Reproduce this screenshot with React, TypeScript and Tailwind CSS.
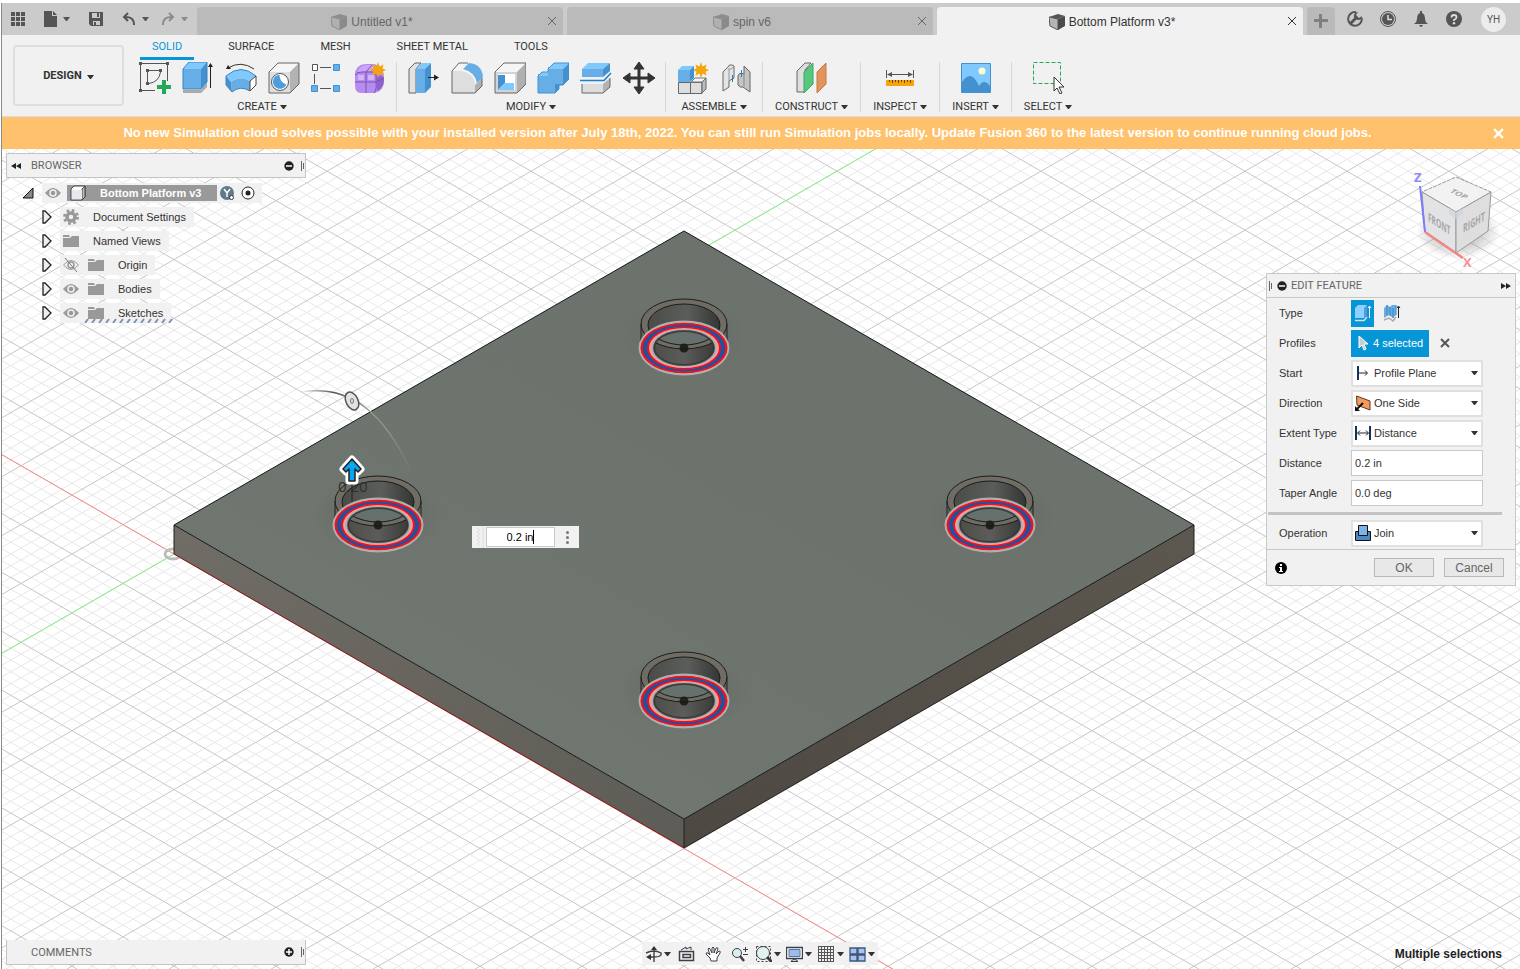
import { useState, type ReactNode } from "react";

const STEP_X = 51;
const STEP_Y = 29.445;
const ORIGIN_X = 174;
const ORIGIN_Y = 554;
const SLOPE = STEP_Y / STEP_X;

const HOLES = [
  [684, 348],
  [990, 525],
  [684, 701],
  [378, 525],
];

// One path per family of isometric grid lines, so the whole grid is two nodes.
function gridPaths() {
  let major = "";
  let minor = "";
  for (let i = -200; i <= 300; i++) {
    const offset = (i * STEP_Y * 2) / 5;
    const down = ORIGIN_Y + offset - ORIGIN_X * SLOPE;
    const up = ORIGIN_Y + offset + ORIGIN_X * SLOPE;
    const line =
      `M0 ${down.toFixed(2)}L1520 ${(down + 1520 * SLOPE).toFixed(2)}` +
      `M0 ${up.toFixed(2)}L1520 ${(up - 1520 * SLOPE).toFixed(2)}`;
    if (i % 5 === 0) major += line;
    else minor += line;
  }
  return { major, minor };
}

const GRID = gridPaths();

function ring(rx: number, ry: number) {
  return `M${-rx} 0A${rx} ${ry} 0 1 0 ${rx} 0A${rx} ${ry} 0 1 0 ${-rx} 0Z`;
}

function Hole({ x, y }: { x: number; y: number }) {
  return (
    <g transform={`translate(${x} ${y})`}>
      <ellipse cy="-10" rx="66" ry="40" fill="url(#holeShade)" />
      <path d="M-43 -24V-2H43V-24Z" fill="#65625b" />
      <ellipse cy="-24" rx="43" ry="25" fill="#6f6c64" stroke="#1c1c1a" />
      <ellipse cy="-23" rx="36" ry="21" fill="url(#bore)" stroke="#1c1c1a" />
      <path d="M-43 -24V-6M43 -24V-6" stroke="#222" />
      <path d={ring(45.5, 27.5) + ring(30, 17)} fill="#b3aeae" fillRule="evenodd" />
      <path d={ring(36, 21) + ring(33, 19)} fill="#f0a0a0" fillRule="evenodd" />
      <path d={ring(43, 25) + ring(36, 21)} fill="#1f51a3" fillRule="evenodd" />
      <path d={ring(43.5, 25.3) + ring(41.3, 23.6)} fill="#f80f16" fillRule="evenodd" />
      <path d={ring(37, 21.6) + ring(35, 20)} fill="#f80f16" fillRule="evenodd" />
      <g clipPath="url(#holeClip)">
        <rect x="-32" y="-20" width="64" height="40" fill="url(#lower)" />
        <ellipse cy="-24" rx="43" ry="25" fill="#6f6c64" stroke="#1c1c1a" />
        <ellipse cy="-24" rx="36" ry="21" fill="#66706d" stroke="#1c1c1a" />
      </g>
      <ellipse rx="30" ry="17" fill="none" stroke="#2c2f30" strokeWidth="2" opacity="0.75" />
      <circle r="4.5" fill="#151515" opacity="0.85" />
    </g>
  );
}

function Scene() {
  return (
    <svg
      className="absolute inset-0 h-full w-full"
      viewBox="2 149 1518 820"
      preserveAspectRatio="xMidYMid slice"
      fill="none"
      aria-label="Model view"
    >
      <defs>
        <linearGradient id="topFace" x1="0" y1="1" x2="1" y2="0">
          <stop offset="0" stopColor="#727872" />
          <stop offset="0.5" stopColor="#6d736d" />
          <stop offset="1" stopColor="#6c716c" />
        </linearGradient>
        <linearGradient id="leftFace" x1="0" y1="0" x2="1" y2="1">
          <stop offset="0" stopColor="#706d66" />
          <stop offset="1" stopColor="#5e5c56" />
        </linearGradient>
        <linearGradient id="rightFace" x1="0" y1="1" x2="1" y2="0">
          <stop offset="0" stopColor="#4d4841" />
          <stop offset="1" stopColor="#5c5850" />
        </linearGradient>
        <linearGradient id="bore">
          <stop offset="0" stopColor="#4a4c48" />
          <stop offset="0.55" stopColor="#5a5d5a" />
          <stop offset="1" stopColor="#343635" />
        </linearGradient>
        <linearGradient id="lower">
          <stop offset="0" stopColor="#4c4c48" />
          <stop offset="0.5" stopColor="#5c5d5a" />
          <stop offset="1" stopColor="#393a38" />
        </linearGradient>
        <linearGradient id="arcFade" x1="300" y1="0" x2="412" y2="0" gradientUnits="userSpaceOnUse">
          <stop offset="0" stopColor="#555" stopOpacity="0" />
          <stop offset="0.3" stopColor="#555" />
          <stop offset="0.6" stopColor="#999" />
          <stop offset="1" stopColor="#bbb" stopOpacity="0" />
        </linearGradient>
        <radialGradient id="holeShade">
          <stop offset="0.5" stopColor="#646964" stopOpacity="0.6" />
          <stop offset="1" stopColor="#646964" stopOpacity="0" />
        </radialGradient>
        <radialGradient id="cubeShadow">
          <stop offset="0.4" stopColor="#777" stopOpacity="0.45" />
          <stop offset="1" stopColor="#777" stopOpacity="0" />
        </radialGradient>
        <clipPath id="holeClip">
          <ellipse rx="30" ry="17" />
        </clipPath>
      </defs>

      <path d={GRID.minor} stroke="#e8e8e8" />
      <path d={GRID.major} stroke="#c6c6c6" />
      <path d="M0 453.600L174 554L1000 1031" stroke="#ff8c8c" />
      <path d="M0 654.400L174 554L1000 77" stroke="#86f586" />
      <ellipse cx="173" cy="554" rx="8" ry="5" stroke="#bdbdbd" strokeWidth="3" />

      <path d="M174 525L684 819V848L174 554Z" fill="url(#leftFace)" />
      <path d="M1194 525L684 819V848L1194 554Z" fill="url(#rightFace)" />
      <path d="M684 231L1194 525L684 819L174 525Z" fill="url(#topFace)" stroke="#12161a" />
      <path d="M174 525V554M684 819V848L1194 554V525" stroke="#22211f" />
      <path d="M174 554L684 848" stroke="#7d1818" />

      {HOLES.map(([x, y]) => (
        <Hole key={`${x}-${y}`} x={x} y={y} />
      ))}

      <path d="M301 392C352 384 385 415 411 471" stroke="url(#arcFade)" strokeWidth="1.5" />
      <ellipse cx="352" cy="401" rx="6" ry="9.500" transform="rotate(-26 352 401)" fill="#e3e3e3" stroke="#555" strokeWidth="1.500" />
      <ellipse cx="352" cy="401" rx="1.500" ry="2.500" stroke="#777" />
      <text x="338" y="492" fontSize="15" fill="#2e302e" className="font-['Open_Sans',sans-serif]">0.20</text>
      <path d="M352 484V502" stroke="#222" />
      <path d="M352 459L361 469L358 472L355 469V481H349V469L346 472L343 469Z" fill="#08a5f0" stroke="#fff" strokeWidth="7" strokeLinejoin="round" />
      <path d="M352 459L361 469L358 472L355 469V481H349V469L346 472L343 469Z" fill="#08a5f0" stroke="#222" strokeWidth="1.500" strokeLinejoin="round" />
    </svg>
  );
}

function ViewCube() {
  return (
    <svg className="absolute top-5 right-5 h-[104px] w-[96px]" viewBox="1404 169 96 104" aria-label="View cube">
      <ellipse cx="1458" cy="232" rx="42" ry="27" fill="url(#cubeShadow)" />
      <path d="M1456 177L1491 192L1456 212L1422 192Z" fill="#f2f2f2" stroke="#999" strokeDasharray="4 1" />
      <path d="M1422 192L1456 212V253L1425 232Z" fill="#e3e3e5" stroke="#999" />
      <path d="M1491 192L1456 212V253L1488 231Z" fill="#dedede" stroke="#999" />
      <path d="M1449 208L1456 212L1463 208V214L1456 219L1449 214Z" fill="#cdd3e0" opacity="0.7" />
      <g className="font-['Open_Sans',sans-serif] font-bold" fill="#a5a7ab" fontSize="10">
        <text transform="matrix(.87 .4 -.7 .5 1449 192)" fontSize="9">TOP</text>
        <text transform="matrix(.66 .42 0 1.200 1428 221)">FRONT</text>
        <text transform="matrix(.72 -.42 0 1.200 1463 233)">RIGHT</text>
      </g>
      <path d="M1420 186L1425 232" stroke="#7d7dfa" strokeWidth="2" />
      <path d="M1425 232L1463 258" stroke="#f08585" strokeWidth="2.500" />
      <text x="1414" y="182" fontSize="13" className="font-['Open_Sans',sans-serif] font-bold" fill="#8b8bf5">Z</text>
      <text x="1463" y="267" fontSize="13" className="font-['Open_Sans',sans-serif] font-bold" fill="#f79292">X</text>
    </svg>
  );
}

const Caret = () => (
  <svg className="h-[4px] w-[7px] shrink-0" viewBox="0 0 7 4" fill="currentColor">
    <path d="M0 0H7L4 4H3Z" />
  </svg>
);

function Icon({ children }: { children: ReactNode }) {
  return (
    <svg className="size-8" viewBox="0 0 32 32" fill="none">
      {children}
    </svg>
  );
}

const STAR = "M24 0L25.500 4.500L29.500 2.500L28.500 6.500L32 8L28.500 9.800L29.500 13.500L25.500 11.500L24 16L22.500 11.500L18.500 13.500L19.500 9.800L16 8L19.500 6.500L18.500 2.500L22.500 4.500Z";

const ICONS: Record<string, ReactNode> = {
  sketch: (
    <>
      <path d="M3 1.500H27M1.500 3V27M28.500 3V19M3 28.500H16" stroke="#555" />
      <path d="M0 0h3v3H0zM27 0h3v3h-3zM0 27h3v3H0zM7 7h3v3H7zM20 7h3v3h-3zM7 20h3v3H7z" fill="#555" />
      <path d="M10 8.500H20M8.500 10V20M21.500 10Q20 20 10 21.500" stroke="#555" />
      <path d="M23 18h4v5h5v4h-5v5h-4v-5h-5v-4h5z" fill="#24a95b" />
    </>
  ),
  extrude: (
    <>
      <path d="M1 28H19L25 21V25L19 31H1Z" fill="#aaa" />
      <path d="M1 7H19V27H1Z" fill="#67aee6" />
      <path d="M1 7L7 0H25L19 7Z" fill="#80c9ff" />
      <path d="M19 7L25 0V20L19 27Z" fill="#4391cf" />
      <path d="M1 7L7 0H25V20L19 27H1Z" stroke="#3f84bb" />
      <path d="M28.500 3V26" stroke="#222" />
      <path d="M26 5L28.500 1L31 5Z" fill="#222" />
    </>
  ),
  revolve: (
    <>
      <path d="M3 6Q16 -2 29 7" stroke="#333" />
      <path d="M1 7L3 3L6 7Z" fill="#222" />
      <path d="M1 14Q16 1 31 14L25 19Q15 13 6 20Z" fill="#80c9ff" />
      <path d="M6 20Q15 13 25 19V29Q15 23 7 30Z" fill="#67aee6" />
      <path d="M1 14L6 20L7 30L1 23Z" fill="#4391cf" />
      <path d="M1 14Q16 1 31 14M1 14V23L7 30Q15 23 25 29" stroke="#3f84bb" />
      <path d="M25 19L31 14V23L25 29Z" fill="#fff" stroke="#444" />
    </>
  ),
  hole: (
    <>
      <path d="M1 10H22V31H1Z" fill="#dedede" />
      <path d="M1 10L10 1H31L22 10Z" fill="#f6f6f6" />
      <path d="M22 10L31 1V22L22 31Z" fill="#b3b3b3" />
      <path d="M1 10L10 1H31V22L22 31H1Z" stroke="#666" />
      <circle cx="12" cy="20" r="8.500" fill="#fff" stroke="#555" />
      <path d="M5.500 17A7 7 0 1 0 18.500 22.500A10 10 0 0 1 11.500 13Q7 13 5.500 17Z" fill="#4c9ddd" />
    </>
  ),
  pattern: (
    <>
      <path d="M9 5.500H20M9 26.500H20M3.500 12V22" stroke="#555" />
      <path d="M1.500 2.500h5v6h-5z" fill="#fff" stroke="#555" />
      <path d="M22.500 2.500h6v6h-6zM0.500 23.500h6v6h-6zM22.500 23.500h6v6h-6z" fill="#67aee6" stroke="#4391cf" />
    </>
  ),
  form: (
    <>
      <path d="M1 13Q1 3 11 2H20Q31 5 30 18Q30 29 21 31H7Q1 31 1 23Z" fill="#b78cf0" />
      <path d="M3 10Q6 4 12 3H20Q25 6 20 9Z" fill="#c9a6f8" />
      <path d="M23 14Q30 12 30 18Q30 26 23 29Z" fill="#8f63cf" />
      <path d="M1 20H22L30 16M12 31V10L18 3M1 13Q3 10 8 10H20Q23 11 22 20Q23 28 20 31" stroke="#7a50b0" />
      <path d="M4 13H10V18H4ZM14 13H20V18H14Z" fill="#d0b5f7" />
      <path d={STAR} fill="#f6a40c" />
    </>
  ),
  press: (
    <>
      <path d="M1 7L7 1H13L8 7V31H1Z" fill="#e2e2e2" stroke="#666" />
      <path d="M8 7H17V31H8Z" fill="#67aee6" />
      <path d="M8 7L14 1H23L17 7Z" fill="#80c9ff" />
      <path d="M17 7L23 1V25L17 31Z" fill="#4391cf" />
      <path d="M20 15.500H27" stroke="#222" />
      <path d="M26 12.500L31 15.500L26 18.500Z" fill="#222" />
    </>
  ),
  fillet: (
    <>
      <path d="M1 9L8 1H18L12 7Q24 9 25 23V31H1Z" fill="#f3f3f3" />
      <path d="M1 9H10Q23 11 24 23V31H1Z" fill="#dedede" />
      <path d="M24 23L31 16V24L24 31Z" fill="#b0b0b0" />
      <path d="M1 9L8 1H17M1 9V31H24L31 24V16" stroke="#666" />
      <path d="M12 7L18 1Q31 2 32 15L26 21Q24 10 12 7Z" fill="#67aee6" />
    </>
  ),
  shell: (
    <>
      <path d="M1 10H23V31H1Z" fill="#d4d4d4" />
      <path d="M1 10L10 1H32L23 10Z" fill="#f5f5f5" />
      <path d="M23 10L32 1V22L23 31Z" fill="#b0b0b0" />
      <path d="M1 10L10 1H32V22L23 31H1Z" stroke="#666" />
      <path d="M4 12H21V28H4Z" fill="#fff" />
      <path d="M4 13V28L11 21V13Z" fill="#4391cf" />
      <path d="M4 28H20V21H11Z" fill="#80c9ff" />
    </>
  ),
  combine: (
    <>
      <path d="M1 12H11V5H26V22H18V31H1Z" fill="#67aee6" />
      <path d="M1 14L5 10H11V14ZM11 7L17 1H32L26 7Z" fill="#80c9ff" />
      <path d="M26 7L32 1V17L26 23H22V27L18 31V22L26 22Z" fill="#4391cf" />
      <path d="M1 14L5 10H11V7L17 1H32V17L26 23H22V27L18 31H1Z" stroke="#4391cf" />
    </>
  ),
  split: (
    <>
      <path d="M2 7H23V15H2Z" fill="#67aee6" />
      <path d="M2 7L8 1H30L23 7Z" fill="#80c9ff" />
      <path d="M23 7L30 1V9L23 15Z" fill="#4391cf" />
      <path d="M0 18.500H24L31 11" stroke="#1583cf" strokeWidth="1.500" />
      <path d="M2 22H23V31H2Z" fill="#dedede" />
      <path d="M23 22L30 16V25L23 31Z" fill="#b3b3b3" />
      <path d="M2 22V31H23L30 25V16" stroke="#666" />
    </>
  ),
  move: (
    <path
      d="M16 0L21 7H17V15H25V11L32 16L25 21V17H17V25H21L16 32L11 25H15V17H7V21L0 16L7 11V15H15V7H11Z"
      fill="#333"
      stroke="#333"
    />
  ),
  component: (
    <>
      <path d="M1.500 20.500H13.500V31.500H1.500ZM13.500 20.500H25V31.500H13.500Z" fill="#dedede" stroke="#666" />
      <path d="M14 20L18 16H29L25 20Z" fill="#f5f5f5" stroke="#777" />
      <path d="M25 20L29 16V27L25 31Z" fill="#bbb" stroke="#666" />
      <path d="M1 8H13V20H1Z" fill="#67aee6" />
      <path d="M1 8L5 4H17L13 8Z" fill="#80c9ff" />
      <path d="M13 8L17 4V16L13 20Z" fill="#4391cf" />
      <path d={STAR} fill="#f6a40c" />
    </>
  ),
  joint: (
    <>
      <path d="M3 10L8 5Q9 2 12 3Q15 3 14 7V16L9 19V25L3 29Z" fill="#e4e4e4" stroke="#666" />
      <path d="M9 6V19M9 8L14 5" stroke="#999" />
      <path d="M30 10L24 4V12Q19 10 18 14V23Q20 26 23 25L30 30Z" fill="#c4c4c4" stroke="#666" />
      <path d="M24 12V24" stroke="#888" />
      <path d="M12.500 13V20M21.500 8V15" stroke="#1583cf" />
    </>
  ),
  plane: (
    <>
      <path d="M1 9L9 1H15L9 8V30H1Z" fill="#dedede" stroke="#666" />
      <path d="M8 10L17 1V22L8 31Z" fill="#58c77e" stroke="#3ca664" />
      <path d="M21 10L30 1V22L21 31Z" fill="#e3935d" stroke="#c87943" />
    </>
  ),
  measure: (
    <>
      <path d="M2.500 8V16M29.500 8V16M4 12.500H28" stroke="#555" />
      <path d="M3 12.500L8 10V15ZM29 12.500L24 10V15Z" fill="#555" />
      <path d="M2 18H30V24H2Z" fill="#f6a40c" />
      <path d="M5.500 18V20M8.500 18V21M11.500 18V20M14.500 18V21M17.500 18V20M20.500 18V21M23.500 18V20M26.500 18V21" stroke="#6b4500" />
    </>
  ),
  insert: (
    <>
      <path d="M2 2H30V30H2Z" fill="#80c9ff" />
      <path d="M2 20Q10 8 17 20L19 24Q24 16 30 24V30H2Z" fill="#4391cf" />
      <circle cx="22" cy="9" r="3.500" fill="#fffbd1" />
      <path d="M1.500 1.500H30.500V30.500H1.500Z" stroke="#4391cf" />
    </>
  ),
  select: (
    <>
      <path d="M1.500 0.500H28.500V21.500H1.500Z" stroke="#24a95b" strokeDasharray="4 2" />
      <path d="M22 15V29L25 26L28 32L30 31L27 25H32Z" fill="#fff" stroke="#333" />
    </>
  ),
};

const GROUPS = [
  { label: "CREATE", icons: ["sketch", "extrude", "revolve", "hole", "pattern", "form"] },
  { label: "MODIFY", icons: ["press", "fillet", "shell", "combine", "split", "move"] },
  { label: "ASSEMBLE", icons: ["component", "joint"] },
  { label: "CONSTRUCT", icons: ["plane"] },
  { label: "INSPECT", icons: ["measure"] },
  { label: "INSERT", icons: ["insert"] },
  { label: "SELECT", icons: ["select"] },
];

const RIBBON_TABS = ["SOLID", "SURFACE", "MESH", "SHEET METAL", "TOOLS"];
const DOCUMENTS = ["Untitled v1*", "spin v6", "Bottom Platform v3*"];

function BoxIcon({ active }: { active: boolean }) {
  return (
    <svg className="size-4" viewBox="0 0 16 16">
      <path d="M0 3L9 0L16 2L9 5Z" fill={active ? "#555" : "#8d8d8d"} />
      <path d="M0 3L9 5V16L1 12Z" fill={active ? "#b5b5b5" : "#b0b0b0"} stroke={active ? "#555" : "#8d8d8d"} />
      <path d="M9 5L16 2V12L9 16Z" fill={active ? "#4a4a4a" : "#8a8a8a"} />
    </svg>
  );
}

function Cross({ className }: { className: string }) {
  return (
    <svg className={className} viewBox="0 0 10 10" fill="none" stroke="currentColor">
      <path d="M1 1L9 9M9 1L1 9" />
    </svg>
  );
}

function TitleBar() {
  const [active, setActive] = useState(2);
  return (
    <header className="flex h-8 items-end bg-[#cbcbcb] text-[#555]">
      <div className="flex h-8 w-[195px] shrink-0 items-center gap-[19px] pl-[9px]">
        <button type="button" aria-label="Data panel">
          <svg className="size-[14px]" viewBox="0 0 14 14" fill="currentColor">
            <path d="M0 0h4v4H0zM5 0h4v4H5zM10 0h4v4h-4zM0 5h4v4H0zM5 5h4v4H5zM10 5h4v4h-4zM0 10h4v4H0zM5 10h4v4H5zM10 10h4v4h-4z" />
          </svg>
        </button>
        <button type="button" aria-label="File" className="flex items-center gap-[5px]">
          <svg className="h-4 w-[14px]" viewBox="0 0 14 16" fill="currentColor">
            <path d="M0 0H8V5H13V16H0Z" />
            <path d="M9 0L13 4H9Z" />
          </svg>
          <Caret />
        </button>
        <button type="button" aria-label="Save">
          <svg className="size-[14px]" viewBox="0 0 14 14">
            <path d="M0 0H14V14H2L0 12Z" fill="currentColor" />
            <path d="M3 1H11V6H3ZM4 9H11V13H4Z" fill="#cbcbcb" />
            <path d="M8 1H10V5H8ZM5 10H7V13H5Z" fill="currentColor" />
          </svg>
        </button>
        <div className="flex gap-3">
          <button type="button" aria-label="Undo" className="flex items-center gap-[6px]">
            <svg className="size-[14px]" viewBox="0 0 14 14" fill="none" stroke="currentColor" strokeWidth="2">
              <path d="M6 1L2 5L6 9M2 5Q12 4 12 13" />
            </svg>
            <Caret />
          </button>
          <button type="button" aria-label="Redo" className="flex items-center gap-[6px] text-[#8c8c8c]">
            <svg className="size-[14px]" viewBox="0 0 14 14" fill="none" stroke="currentColor" strokeWidth="2">
              <path d="M8 1L12 5L8 9M12 5Q2 4 2 13" />
            </svg>
            <Caret />
          </button>
        </div>
      </div>
      <nav className="flex h-7 min-w-0 flex-1 gap-1">
        {DOCUMENTS.map((name, i) => (
          <div
            key={name}
            className={`flex min-w-0 flex-1 items-center rounded-t pr-[6px] ${
              i === active ? "bg-[#f1f1f1] text-[#333]" : "bg-[#bababa] text-[#666]"
            }`}
          >
            <button
              type="button"
              onClick={() => setActive(i)}
              className="flex min-w-0 flex-1 items-center justify-center gap-1 pt-px text-[12px]"
            >
              <BoxIcon active={i === active} />
              {name}
            </button>
            <button type="button" aria-label={`Close ${name}`}>
              <Cross className="size-[10px]" />
            </button>
          </div>
        ))}
        <button type="button" aria-label="New design" className="flex w-7 items-center justify-center rounded-t bg-[#bababa] text-[#808080]">
          <svg className="size-[14px]" viewBox="0 0 14 14" fill="currentColor">
            <path d="M5 0h3v5h6v3H8v6H5V8H0V5h5z" />
          </svg>
        </button>
      </nav>
      <div className="flex h-8 w-[185px] shrink-0 items-center gap-[17px] pl-3">
        <button type="button" aria-label="Extensions">
          <svg className="size-4" viewBox="0 0 16 16" fill="none" stroke="currentColor">
            <path d="M9 1.200A6.800 6.800 0 1 0 14.700 7" strokeWidth="2" />
            <path d="M3 13L9 7" strokeWidth="3" />
            <path d="M11 1L9 4L12 7L15 5Q15 9 11 9Q6 8 7 4Q8 1 11 1Z" fill="currentColor" stroke="none" />
          </svg>
        </button>
        <button type="button" aria-label="Job status">
          <svg className="size-4" viewBox="0 0 16 16" fill="none">
            <circle cx="8" cy="8" r="7.500" stroke="currentColor" />
            <circle cx="8" cy="8" r="6" fill="currentColor" />
            <path d="M8 4V8.500H12" stroke="#ddd" strokeWidth="1.500" />
          </svg>
        </button>
        <button type="button" aria-label="Notifications">
          <svg className="size-4" viewBox="0 0 16 16" fill="currentColor">
            <path d="M7 0H9V2Q12 3 12 8Q12 11 15 13H1Q4 11 4 8Q4 3 7 2ZM6 14H10Q9 16 8 16Q7 16 6 14Z" />
          </svg>
        </button>
        <button type="button" aria-label="Help">
          <svg className="size-4" viewBox="0 0 16 16">
            <circle cx="8" cy="8" r="8" fill="currentColor" />
            <path d="M5.500 6.500Q5.500 4 8 4T10.500 6.200Q10.500 7.500 8 9V10" stroke="#ddd" strokeWidth="1.800" fill="none" />
            <circle cx="8" cy="12.200" r="1.200" fill="#ddd" />
          </svg>
        </button>
        <button type="button" className="ml-[2px] size-[25px] rounded-full bg-[#ececec] font-['Roboto',sans-serif] text-[10px]">
          YH
        </button>
      </div>
    </header>
  );
}

function Ribbon() {
  const [tab, setTab] = useState("SOLID");
  return (
    <div className="flex border-b border-[#dcdcdc] bg-[#f1f1f1] font-['Roboto',sans-serif] text-[11px] text-[#333]">
      <button
        type="button"
        className="mt-[10px] mb-[10px] ml-[11px] flex w-[111px] items-center justify-center gap-[5px] rounded border-2 border-[#dedede] pt-[2px] font-bold"
      >
        DESIGN
        <Caret />
      </button>
      <div className="min-w-0 pl-[9px]">
        <nav className="flex h-[25px] gap-[22px] pl-[7px]">
          {RIBBON_TABS.map((name) => (
            <button
              key={name}
              type="button"
              onClick={() => setTab(name)}
              className={`border-b-[3px] px-3 pt-[2px] ${
                tab === name ? "border-[#0696d7] text-[#0696d7]" : "border-transparent"
              }`}
            >
              {name}
            </button>
          ))}
        </nav>
        <div className="flex">
          {GROUPS.map((group, i) => (
            <div key={group.label} className="flex">
              {i > 0 && <div className="mt-[2px] mb-1 w-px bg-[#d6d6d6]" />}
              <div className={group.icons.length > 1 ? (i === 0 ? "pr-[5px]" : "px-[5px]") : "px-3"}>
                <div className="flex h-9 items-center justify-center">
                  {group.icons.map((name) => (
                    <button key={name} type="button" aria-label={name} className="flex w-[43px] justify-center">
                      <Icon>{ICONS[name]}</Icon>
                    </button>
                  ))}
                </div>
                <button type="button" className="flex h-5 w-full items-center justify-center gap-[3px] pt-[2px]">
                  {group.label}
                  <Caret />
                </button>
              </div>
            </div>
          ))}
        </div>
      </div>
    </div>
  );
}

const Grip = () => (
  <svg className="h-[10px] w-[3px]" viewBox="0 0 3 10" fill="#666">
    <path d="M0 0h1v10H0zM2 2h1v6H2z" />
  </svg>
);

function Rewind({ flip }: { flip?: boolean }) {
  return (
    <svg className={`h-[6px] w-[10px] ${flip ? "rotate-180" : ""}`} viewBox="0 0 10 6" fill="#222">
      <path d="M0 3L5 0V6ZM5 3L10 0V6Z" />
    </svg>
  );
}

function RoundSign({ plus }: { plus?: boolean }) {
  return (
    <svg className="size-[10px]" viewBox="0 0 10 10">
      <circle cx="5" cy="5" r="4.700" fill="#222" />
      <path d={plus ? "M2 5H8M5 2V8" : "M2 5H8"} stroke="#fff" strokeWidth="1.500" />
    </svg>
  );
}

function Eye({ off }: { off?: boolean }) {
  return (
    <svg className="size-4" viewBox="0 0 16 16" fill="none">
      <path d="M0.500 8Q8 -1 15.500 8Q8 17 0.500 8Z" fill={off ? "none" : "#999"} stroke="#999" />
      <circle cx="8" cy="8" r="3" fill={off ? "none" : "#999"} stroke={off ? "#999" : "#f1f1f1"} strokeWidth="1.500" />
      {off && <path d="M2 1L14 15" stroke="#777" />}
    </svg>
  );
}

const Folder = () => (
  <svg className="size-4" viewBox="0 0 16 16" fill="#999">
    <path d="M0 2H6L7 4H0ZM0 5H7L9 3H16V14H0Z" />
  </svg>
);

const Gear = () => (
  <svg className="size-4" viewBox="0 0 16 16" fill="none" stroke="#999">
    <circle cx="8" cy="8" r="4" strokeWidth="3.500" />
    <circle cx="8" cy="8" r="6.500" strokeWidth="3" strokeDasharray="2.550 2.550" />
  </svg>
);

const TREE = [
  { name: "Document Settings", icons: <Gear /> },
  { name: "Named Views", icons: <Folder /> },
  { name: "Origin", icons: <><Eye off /><Folder /></> },
  { name: "Bodies", icons: <><Eye /><Folder /></> },
  { name: "Sketches", icons: <><Eye /><Folder /></> },
];

function Browser() {
  return (
    <aside className="absolute top-1 left-1 w-[300px] text-[11px] text-[#333]">
      <div className="flex h-[25px] items-center border border-[#c4c4c4] bg-[#f1f1f1] pl-1">
        <Rewind />
        <h2 className="flex-1 pt-[2px] pl-[10px] font-['Roboto',sans-serif] text-[#666]">BROWSER</h2>
        <button type="button" aria-label="Collapse browser">
          <RoundSign />
        </button>
        <span className="pr-px pl-[7px]">
          <Grip />
        </span>
      </div>
      <div className="flex h-6 items-center pl-4 pt-[6px]">
        <svg className="mr-2 size-3" viewBox="0 0 12 12">
          <path d="M11 1V11H1Z" fill="#888" stroke="#111" />
        </svg>
        <div className="flex h-5 items-center bg-[#f1f1f1] pr-[7px] pl-[3px]">
          <Eye />
          <div className="ml-[6px] flex h-4 w-[150px] items-center bg-[#999] pl-[3px] font-bold text-white">
            <svg className="mr-[14px] size-4" viewBox="0 0 16 16" strokeLinejoin="round">
              <path d="M1 4L4 1H15V12L12 15H1Z" fill="#fff" stroke="#444" />
              <path d="M12 4L15 1V12L12 15Z" fill="#bbb" stroke="#444" />
              <path d="M2 5H12V14H2Z" fill="#e8e8ee" />
            </svg>
            Bottom Platform v3
          </div>
          <svg className="ml-[3px] size-[14px]" viewBox="0 0 14 14" fill="none">
            <circle cx="7" cy="7" r="7" fill="#5d7b8a" />
            <path d="M4 3L7 7L10 3M7 7V11" stroke="#fff" strokeWidth="1.500" />
            <circle cx="11.500" cy="11.500" r="2" fill="#fff" stroke="#333" />
          </svg>
          <svg className="ml-[7px] size-[14px]" viewBox="0 0 14 14">
            <circle cx="7" cy="7" r="6" fill="#fff" stroke="#222" />
            <circle cx="7" cy="7" r="2.500" fill="#222" />
          </svg>
        </div>
      </div>
      <ul className="pt-[3px]">
        {TREE.map((node) => (
          <li key={node.name} className="flex h-6 items-center pl-9">
            <svg className="mr-[7px] h-[14px] w-[11px]" viewBox="0 0 11 14" fill="#eee">
              <path d="M1 1H3L9 7L3 13H1Z" stroke="#222" strokeWidth="1.300" />
            </svg>
            <div className="relative flex h-5 items-center gap-[9px] bg-[#f1f1f1] pr-2 pl-[3px]">
              {node.icons}
              <span className="pl-[5px]">{node.name}</span>
              {node.name === "Sketches" && (
                <svg className="absolute bottom-0 left-6 h-[5px] w-[90px]" viewBox="0 0 90 5" stroke="#8090b5" strokeWidth="2">
                  <path d="M1 5l3-4M8 5l3-4M15 5l3-4M22 5l3-4M29 5l3-4M36 5l3-4M43 5l3-4M50 5l3-4M57 5l3-4M64 5l3-4M71 5l3-4M78 5l3-4M85 5l3-4" />
                </svg>
              )}
            </div>
          </li>
        ))}
      </ul>
    </aside>
  );
}

function Row({ label, htmlFor, children }: { label: string; htmlFor?: string; children: ReactNode }) {
  return (
    <div className="flex h-[30px] items-center pl-3">
      <label htmlFor={htmlFor} className="w-[72px]">
        {label}
      </label>
      {children}
    </div>
  );
}

function Picker({ id, value, icon }: { id: string; value: string; icon: ReactNode }) {
  return (
    <div className="relative w-[132px]">
      <select
        id={id}
        className="block h-[27px] w-full appearance-none border-2 border-[#e0e0e0] bg-white pl-[21px]"
      >
        <option>{value}</option>
      </select>
      <svg className="pointer-events-none absolute top-[5px] left-1 size-4" viewBox="0 0 16 16" fill="none">
        {icon}
      </svg>
      <span className="pointer-events-none absolute top-[11px] right-[5px]">
        <Caret />
      </span>
    </div>
  );
}

function EditFeature() {
  const [distance, setDistance] = useState("0.2 in");
  const [taper, setTaper] = useState("0.0 deg");
  return (
    <section className="absolute top-[124px] right-1 w-[250px] border border-[#c8c8c8] bg-[#f1f1f1] text-[11px] text-[#333]">
      <header className="flex h-6 items-center border-b border-[#c8c8c8] pr-1 pl-[2px]">
        <Grip />
        <span className="pl-[5px]">
          <RoundSign />
        </span>
        <h2 className="flex-1 pt-[2px] pl-[4px] font-['Roboto',sans-serif] text-[#666]">EDIT FEATURE</h2>
        <Rewind flip />
      </header>
      <Row label="Type">
        <button type="button" aria-label="Extrude" className="flex h-[27px] w-[23px] items-center justify-center bg-[#0696d7]">
          <svg className="size-[18px]" viewBox="0 0 18 18" fill="none">
            <path d="M1 14V4L4 1H13V11L10 14Z" fill="#8fd0ff" />
            <path d="M10 4L13 1V11L10 14Z" fill="#4f9bd5" />
            <path d="M1 16.500H10L13 13" stroke="#ddd" strokeWidth="1.500" />
            <path d="M15.500 3V14M14 4L15.500 2L17 4" stroke="#fff" />
          </svg>
        </button>
        <button type="button" aria-label="Thin extrude" className="ml-[6px] flex h-[27px] w-[23px] items-center justify-center">
          <svg className="size-[18px]" viewBox="0 0 18 18" fill="none">
            <path d="M1 4L4 1L7 3L9 1H13V11L10 14L6 11L1 14Z" fill="#67aee6" />
            <path d="M4 1V11M7 3V12M10 4V14M13 1V11" stroke="#3f84bb" />
            <path d="M1 16L6 14L10 17L13 13" stroke="#aaa" strokeWidth="1.500" />
            <path d="M15.500 3V14M14 4L15.500 2L17 4" stroke="#222" />
          </svg>
        </button>
      </Row>
      <Row label="Profiles">
        <button type="button" className="flex h-[27px] w-[78px] items-center gap-1 bg-[#0696d7] pl-[7px] whitespace-nowrap text-white">
          <svg className="h-4 w-[11px] shrink-0" viewBox="0 0 11 16">
            <path d="M1 1V13L4 10L6 15L8 14L6 9H10Z" fill="#ccc" stroke="#fff" />
          </svg>
          4 selected
        </button>
        <button type="button" aria-label="Clear selection" className="ml-[11px] text-[#555]">
          <Cross className="size-[10px] stroke-2" />
        </button>
      </Row>
      <Row label="Start" htmlFor="start">
        <Picker
          id="start"
          value="Profile Plane"
          icon={<><path d="M3 1V15" stroke="#14305c" strokeWidth="2" /><path d="M4 8H12M10 5.500L12.500 8L10 10.500" stroke="#222" /></>}
        />
      </Row>
      <Row label="Direction" htmlFor="direction">
        <Picker
          id="direction"
          value="One Side"
          icon={<><path d="M1.500 1L15 6V15L2 10Z" fill="#f39a5c" stroke="#5a3520" /><path d="M8 8L2 14" stroke="#111" strokeWidth="2" /><path d="M0 16V11L5 16Z" fill="#111" /></>}
        />
      </Row>
      <Row label="Extent Type" htmlFor="extent">
        <Picker
          id="extent"
          value="Distance"
          icon={<><path d="M1 1V15M15 1V15" stroke="#14305c" strokeWidth="2" /><path d="M3 8H13M5 5.500L2.500 8L5 10.500M11 5.500L13.500 8L11 10.500" stroke="#222" /></>}
        />
      </Row>
      <Row label="Distance" htmlFor="distance">
        <input
          id="distance"
          value={distance}
          onChange={(e) => setDistance(e.target.value)}
          className="h-[26px] w-[132px] border border-[#c8c8c8] bg-white pl-[3px]"
        />
      </Row>
      <Row label="Taper Angle" htmlFor="taper">
        <input
          id="taper"
          value={taper}
          onChange={(e) => setTaper(e.target.value)}
          className="h-[26px] w-[132px] border border-[#c8c8c8] bg-white pl-[3px]"
        />
      </Row>
      <hr className="mt-1 mr-[13px] mb-[3px] ml-px h-[3px] border-0 bg-[#c4c4c4]" />
      <Row label="Operation" htmlFor="operation">
        <Picker
          id="operation"
          value="Join"
          icon={<><path d="M0.500 6.500H15.500V15.500H0.500Z" fill="#4f87c4" stroke="#111" /><path d="M3.500 0.500H12.500V10.500H3.500Z" fill="#7cb3e6" stroke="#111" /></>}
        />
      </Row>
      <footer className="mt-px flex h-9 items-center gap-[10px] border-t border-[#c8c8c8] pr-[11px] pl-2 text-[12px] text-[#666]">
        <svg className="mr-auto size-3" viewBox="0 0 12 12">
          <circle cx="6" cy="6" r="6" fill="#000" />
          <path d="M5 2H7V4H5ZM4 5H7V9H8V10H4V9H5V6H4Z" fill="#fff" />
        </svg>
        <button type="button" className="flex h-[19px] w-[60px] items-center justify-center border border-[#b8b8b8] bg-[#e8e8e8]">OK</button>
        <button type="button" className="flex h-[19px] w-[60px] items-center justify-center border border-[#b8b8b8] bg-[#e8e8e8]">Cancel</button>
      </footer>
    </section>
  );
}

function ValueBox() {
  const [value, setValue] = useState("0.2 in");
  return (
    <div className="absolute top-[377px] left-[470px] flex h-[22px] w-[107px] items-center bg-[#f1f1f1] text-[11px]">
      <svg className="mr-[2px] h-[22px] w-3" viewBox="0 0 12 22">
        <path d="M5 2l3 2-3 2 3 2-3 2 3 2-3 2 3 2-3 2 3 2" stroke="#d0d0d0" strokeDasharray="1 1" fill="none" />
        <path d="M11 0V22" stroke="#dcdcdc" />
      </svg>
      <div className="flex h-5 w-[69px] items-center justify-center border border-[#c8c8c8] bg-white">
        <input
          aria-label="Distance value"
          value={value}
          onChange={(e) => setValue(e.target.value)}
          className="field-sizing-content caret-transparent outline-none"
        />
        <span className="h-[14px] w-px bg-black" />
      </div>
      <button type="button" aria-label="More options" className="ml-[11px]">
        <svg className="h-[13px] w-[3px]" viewBox="0 0 3 13" fill="#777">
          <circle cx="1.500" cy="1.500" r="1.500" />
          <circle cx="1.500" cy="6.500" r="1.500" />
          <circle cx="1.500" cy="11.500" r="1.500" />
        </svg>
      </button>
    </div>
  );
}

const NAV_TOOLS: { name: string; menu: boolean; art: ReactNode }[] = [
  {
    name: "Orbit",
    menu: true,
    art: <><path d="M9 1V16M1 7Q9 3 16 7Q17 11 9 11H5" strokeWidth="1.400" /><path d="M1 11L6 8V14ZM6 4L9 0L12 4Z" fill="#333" stroke="none" /></>,
  },
  {
    name: "Look at",
    menu: false,
    art: <><path d="M1.500 5.500H15.500V14.500H1.500ZM5 8.500H12.500V11.500H5Z" strokeWidth="1.500" /><path d="M3 4L8 1V3L13 1V4" /></>,
  },
  {
    name: "Pan",
    menu: false,
    art: <path d="M5 12L1 8Q1 6 3 7L5 9L3 3Q4 1 5 3L7 7V2Q8 0 9 2V7L11 2Q13 1 13 3L11 8L14 5Q16 5 15 7L12 12V15H6Z" fill="#fff" />,
  },
  {
    name: "Zoom",
    menu: false,
    art: <><circle cx="6" cy="7" r="4.500" fill="#dbeef0" /><path d="M9 10L13 15" strokeWidth="2.500" /><path d="M12 3.500H17M14.500 1V6M12 8.500H17" /></>,
  },
  {
    name: "Fit",
    menu: true,
    art: <><path d="M1.500 0.500H15.500V15.500H1.500Z" strokeDasharray="2 2" /><circle cx="8" cy="7" r="6.500" fill="#e3f1f1" /><path d="M12 11L17 16" strokeWidth="3" /></>,
  },
  {
    name: "Display settings",
    menu: true,
    art: <><path d="M0.500 1.500H16.500V12.500H0.500Z" fill="#fff" strokeWidth="1.400" /><path d="M3 3.500H14V10.500H3Z" fill="#9dbce6" stroke="#5578a8" /><path d="M5 15.500Q8 11 12 15.500Z" fill="#ddd" /></>,
  },
  {
    name: "Grid and snaps",
    menu: true,
    art: <path d="M0.500 0V16M3.500 0V16M6.500 0V16M9.500 0V16M12.500 0V16M15.500 0V16M0 0.500H16M0 3.500H16M0 6.500H16M0 9.500H16M0 12.500H16M0 15.500H16" stroke="#555" />,
  },
  {
    name: "Viewports",
    menu: true,
    art: <path d="M1 2H8V8H1ZM9 2H16V8H9ZM1 9H8V15H1ZM9 9H16V15H9Z" fill="#a9c4e8" stroke="#3c567d" strokeWidth="1.300" />,
  },
];

function NavBar() {
  return (
    <div className="absolute bottom-1 left-[640px] flex h-[23px] w-[236px] items-center justify-between bg-[#f1f1f1] px-[3px]">
      {NAV_TOOLS.map((tool) => (
        <button
          key={tool.name}
          type="button"
          aria-label={tool.name}
          className={`flex items-center gap-[2px] text-[#333] ${tool.menu ? "" : "px-[2px]"}`}
        >
          <svg className="h-4 w-[17px]" viewBox="0 0 17 16" fill="none" stroke="#3c4046">
            {tool.art}
          </svg>
          {tool.menu && <Caret />}
        </button>
      ))}
    </div>
  );
}

export default function App() {
  const [banner, setBanner] = useState(true);
  return (
    <div className="h-screen bg-white pt-[3px] pl-px font-['Liberation_Sans',Arial,sans-serif]">
      <div className="flex h-full flex-col border-l border-[#8a8a8a]">
        <TitleBar />
        <Ribbon />
        {banner && (
          <div className="flex h-8 shrink-0 items-center bg-[#ffc16b] pr-4 text-white">
            <p className="flex-1 text-center text-[13px] font-bold whitespace-nowrap">
              No new Simulation cloud solves possible with your installed version after July 18th, 2022. You can still
              run Simulation jobs locally. Update Fusion 360 to the latest version to continue running cloud jobs.
            </p>
            <button type="button" aria-label="Dismiss" onClick={() => setBanner(false)}>
              <Cross className="size-[11px] stroke-2" />
            </button>
          </div>
        )}
        <main className="relative min-h-0 flex-1 overflow-hidden">
          <Scene />
          <ViewCube />
          <Browser />
          <ValueBox />
          <EditFeature />
          <div className="absolute bottom-1 left-1 flex h-[25px] w-[300px] items-center border-x border-b border-[#c4c4c4] bg-[#f1f1f1] pl-6 text-[11px] text-[#666]">
            <h2 className="flex-1 pt-[3px] font-['Roboto',sans-serif]">COMMENTS</h2>
            <button type="button" aria-label="Add comment">
              <RoundSign plus />
            </button>
            <span className="pr-px pl-[7px]">
              <Grip />
            </span>
          </div>
          <NavBar />
          <p className="absolute right-[18px] bottom-2 text-[12px] leading-[14px] font-bold text-[#222]">Multiple selections</p>
        </main>
      </div>
    </div>
  );
}
